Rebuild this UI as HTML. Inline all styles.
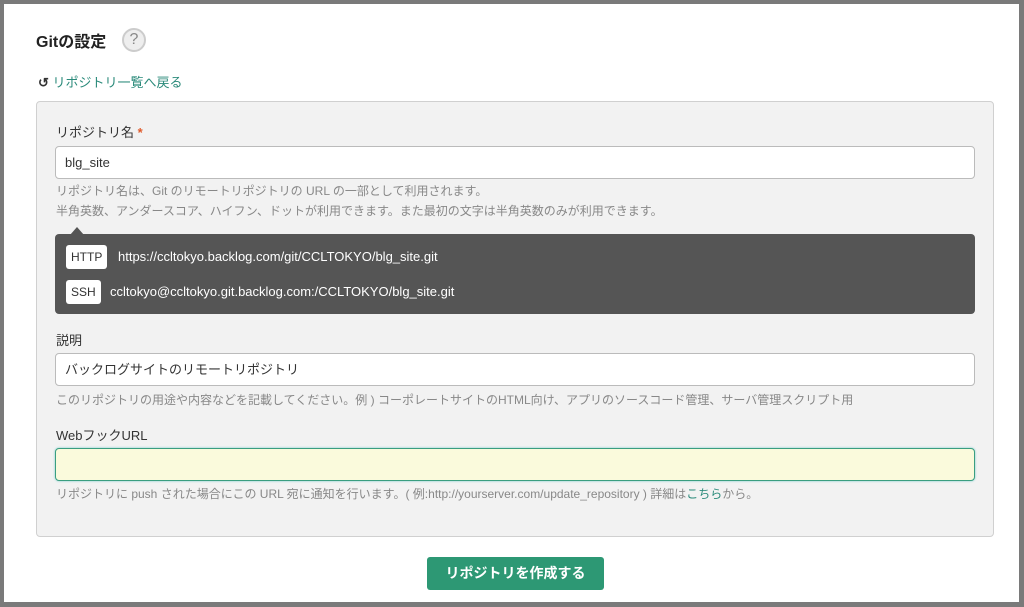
<!DOCTYPE html>
<html><head><meta charset="utf-8"><style>
*{box-sizing:border-box;margin:0;padding:0}
body{width:1024px;height:607px;background:#7a7a7a;font-family:"Liberation Sans","Noto Sans CJK JP",sans-serif;position:relative;overflow:hidden;color:#333}
.page{position:absolute;left:4px;top:4px;width:1015px;height:598px;background:#fff}
.a{position:absolute}
h1{position:absolute;left:32px;top:24px;font-size:16px;font-weight:bold;color:#222}
.q{left:118px;top:24px;width:24px;height:24px;border-radius:50%;background:#eee;border:2px solid #ccc;color:#888;font-size:16px;text-align:center;line-height:20px}
.back{left:34px;top:68px;font-size:13px;color:#2a8a7a}
.panel{left:36px;top:101px;width:958px;height:436px;background:#f2f2f2;border:1px solid #d0d0d0;border-radius:4px}
.lbl{font-size:13px;color:#333}
.inp{left:55px;width:920px;height:33px;background:#fff;border:1px solid #bbb;border-radius:4px;font-size:13px;padding-left:9px;line-height:31px}
.help{font-size:12px;color:#888;left:56px}
.dark{left:55px;top:234px;width:920px;height:80px;background:#555;border-radius:4px}
.notch{left:70px;top:227px;width:0;height:0;border-left:7px solid transparent;border-right:7px solid transparent;border-bottom:8px solid #555}
.badge{background:#fff;color:#333;border-radius:3px;font-size:12px;height:24px;line-height:24px;padding:0 5px}
.url{color:#fff;font-size:13px}
.btn{left:427px;top:557px;width:177px;height:33px;background:#2d9874;border-radius:3px;color:#fff;font-weight:bold;font-size:14px;text-align:center;line-height:33px}
</style></head><body><div class="page">
<h1>Gitの設定</h1>
<div class="a q">?</div>
<div class="a back"><span style="color:#333;font-weight:bold">↺</span> リポジトリ一覧へ戻る</div>
</div>
<div class="a panel"></div>
<div class="a lbl" style="left:56px;top:122px">リポジトリ名 <span style="color:#e05a2b;font-weight:bold">*</span></div>
<div class="a inp" style="top:146px">blg_site</div>
<div class="a help" style="top:181px;line-height:20px">リポジトリ名は、Git のリモートリポジトリの URL の一部として利用されます。<br>半角英数、アンダースコア、ハイフン、ドットが利用できます。また最初の文字は半角英数のみが利用できます。</div>
<div class="a notch"></div>
<div class="a dark"></div>
<div class="a badge" style="left:66px;top:245px">HTTP</div>
<div class="a url" style="left:118px;top:249px">https://ccltokyo.backlog.com/git/CCLTOKYO/blg_site.git</div>
<div class="a badge" style="left:66px;top:280px">SSH</div>
<div class="a url" style="left:110px;top:284px">ccltokyo@ccltokyo.git.backlog.com:/CCLTOKYO/blg_site.git</div>
<div class="a lbl" style="left:56px;top:330px">説明</div>
<div class="a inp" style="top:353px">バックログサイトのリモートリポジトリ</div>
<div class="a help" style="top:391px">このリポジトリの用途や内容などを記載してください。例 ) コーポレートサイトのHTML向け、アプリのソースコード管理、サーバ管理スクリプト用</div>
<div class="a lbl" style="left:56px;top:425px">WebフックURL</div>
<div class="a inp" style="top:448px;background:#fafadc;border:1px solid #3a9e80;box-shadow:0 0 2px #7cc"></div>
<div class="a help" style="top:485px">リポジトリに push された場合にこの URL 宛に通知を行います。( 例:http://yourserver.com/update_repository ) 詳細は<span style="color:#2a8a7a">こちら</span>から。</div>
<div class="a btn">リポジトリを作成する</div>
</body></html>
